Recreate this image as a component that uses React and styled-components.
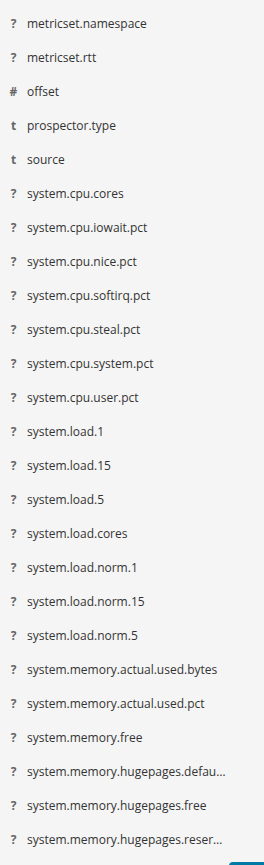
import React from "react";
import styled, { createGlobalStyle } from "styled-components";

const Global = createGlobalStyle`
  html, body { margin: 0; padding: 0; background: #f5f5f5; }
  body { font-family: "Open Sans", "Noto Sans", sans-serif; }
`;

const Panel = styled.div`
  width: 264px;
  height: 865px;
  overflow: hidden;
  background: #f5f5f5;
  position: relative;
`;

const List = styled.ul`
  list-style: none;
  margin: 0;
  padding: 6px 0 0 0;
`;

const Row = styled.li`
  display: flex;
  align-items: center;
  height: 34px;
  padding-left: 9px;
  padding-right: 36px;
`;

const TypeIcon = styled.span`
  flex: 0 0 auto;
  width: 9px;
  margin-right: 9px;
  text-align: center;
  font-size: 12px;
  font-weight: 700;
  color: #666;
`;

const Name = styled.span`
  flex: 1 1 auto;
  min-width: 0;
  font-size: 12px;
  color: #333;
  white-space: nowrap;
  overflow: hidden;
  text-overflow: ellipsis;
`;

const Corner = styled.div`
  position: absolute;
  left: 229px;
  top: 862px;
  width: 60px;
  height: 24px;
  border-radius: 4px;
  background: #0079a5;
`;

const fields = [
  ["?", "metricset.namespace"],
  ["?", "metricset.rtt"],
  ["#", "offset"],
  ["t", "prospector.type"],
  ["t", "source"],
  ["?", "system.cpu.cores"],
  ["?", "system.cpu.iowait.pct"],
  ["?", "system.cpu.nice.pct"],
  ["?", "system.cpu.softirq.pct"],
  ["?", "system.cpu.steal.pct"],
  ["?", "system.cpu.system.pct"],
  ["?", "system.cpu.user.pct"],
  ["?", "system.load.1"],
  ["?", "system.load.15"],
  ["?", "system.load.5"],
  ["?", "system.load.cores"],
  ["?", "system.load.norm.1"],
  ["?", "system.load.norm.15"],
  ["?", "system.load.norm.5"],
  ["?", "system.memory.actual.used.bytes"],
  ["?", "system.memory.actual.used.pct"],
  ["?", "system.memory.free"],
  ["?", "system.memory.hugepages.default_size"],
  ["?", "system.memory.hugepages.free"],
  ["?", "system.memory.hugepages.reserved"],
];

export default function App() {
  return (
    <Panel>
      <Global />
      <List>
        {fields.map(([t, n]) => (
          <Row key={n}>
            <TypeIcon>{t}</TypeIcon>
            <Name>{n}</Name>
          </Row>
        ))}
      </List>
      <Corner />
    </Panel>
  );
}
